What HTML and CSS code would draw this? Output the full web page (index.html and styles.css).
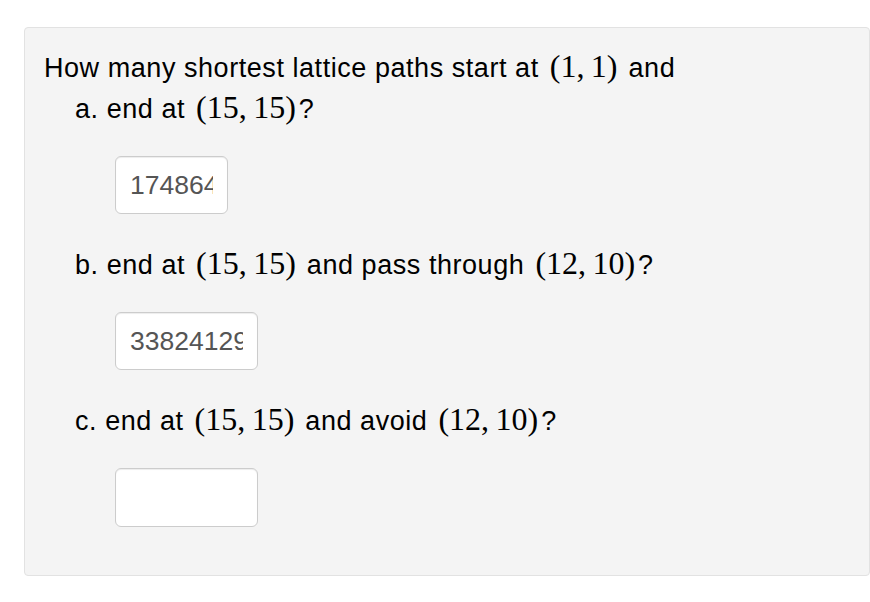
FILE: index.html
```html
<!DOCTYPE html>
<html>
<head>
<meta charset="utf-8">
<link rel="stylesheet" href="styles.css">
</head>
<body>
<div class="panel">
  <p class="intro">How many shortest lattice paths start at <span class="math">(1,&#8201;1)</span> and</p>
  <div class="item">
    <p class="q">a. end at <span class="math">(15,&#8201;15)</span>?</p>
    <input class="answer answer-sm" type="text" value="174864">
  </div>
  <div class="item">
    <p class="q">b. end at <span class="math">(15,&#8201;15)</span> and pass through <span class="math">(12,&#8201;10)</span>?</p>
    <input class="answer" type="text" value="33824129">
  </div>
  <div class="item">
    <p class="q">c. end at <span class="math">(15,&#8201;15)</span> and avoid <span class="math">(12,&#8201;10)</span>?</p>
    <input class="answer answer-last" type="text" value="">
  </div>
</div>
</body>
</html>
```

FILE: styles.css
```css
html, body {
  margin: 0;
  padding: 0;
  background: #ffffff;
}

body {
  font-family: "Liberation Sans", Arial, sans-serif;
  color: #000;
}

.panel {
  margin: 27px 0 0 24px;
  box-sizing: border-box;
  height: 549px;
  border: 1px solid #e2e2e2;
  border-radius: 4px;
  background: #f4f4f4;
  padding: 20px 0 0 19px;
}

.intro,
.q {
  margin: 0;
  font-size: 27px;
  letter-spacing: 0.55px;
  line-height: 41px;
  white-space: nowrap;
}

.item {
  padding-left: 31px;
}

.math {
  font-family: "Liberation Serif", "Times New Roman", serif;
  font-size: 32px;
  letter-spacing: 0;
  line-height: 1;
  margin: 0 3px;
}

.answer {
  display: block;
  box-sizing: border-box;
  margin: 26px 0 31px 40px;
  width: 143px;
  height: 58px;
  padding: 0 14px 0 14px;
  border: 1px solid #cccccc;
  border-radius: 6px;
  background: #ffffff;
  box-shadow: inset 0 1px 1px rgba(0, 0, 0, 0.075);
  font-family: "Liberation Sans", Arial, sans-serif;
  font-size: 26.5px;
  color: #555555;
  outline: none;
}

.answer-sm {
  width: 113px;
}

.answer-last {
  height: 59px;
}
```
